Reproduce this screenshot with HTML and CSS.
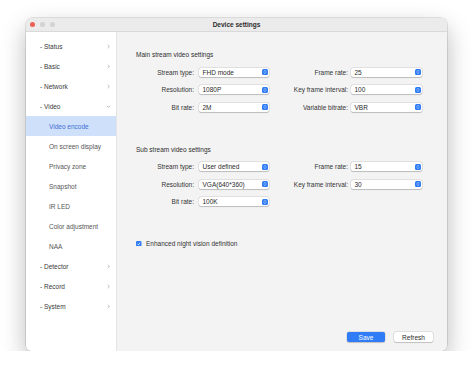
FILE: index.html
```html
<!DOCTYPE html>
<html lang="en">

<head>
    <meta charset="UTF-8">
    <meta name="viewport" content="width=device-width, initial-scale=1.0">
    <title>Device settings</title>

    <link rel="stylesheet" href="styles.css">

</head>

<body>

    <div class="window">

        <div class="titlebar">
            <div class="lights">
                <span class="light red"></span>
                <span class="light"></span>
                <span class="light"></span>
            </div>
            <div class="title">Device settings</div>
        </div>

        <div class="body">

            <!-- menu lateral -->
            <div class="sidebar">
                <div class="item"><span>- Status</span><svg class="chev" viewBox="0 0 6 6"><polyline points="2,1 4,3 2,5"/></svg></div>
                <div class="item"><span>- Basic</span><svg class="chev" viewBox="0 0 6 6"><polyline points="2,1 4,3 2,5"/></svg></div>
                <div class="item"><span>- Network</span><svg class="chev" viewBox="0 0 6 6"><polyline points="2,1 4,3 2,5"/></svg></div>
                <div class="item"><span>- Video</span><svg class="chev" viewBox="0 0 6 6"><polyline points="1,2 3,4 5,2"/></svg></div>
                <div class="sub active">Video encode</div>
                <div class="sub">On screen display</div>
                <div class="sub">Privacy zone</div>
                <div class="sub">Snapshot</div>
                <div class="sub">IR LED</div>
                <div class="sub">Color adjustment</div>
                <div class="sub">NAA</div>
                <div class="item"><span>- Detector</span><svg class="chev" viewBox="0 0 6 6"><polyline points="2,1 4,3 2,5"/></svg></div>
                <div class="item"><span>- Record</span><svg class="chev" viewBox="0 0 6 6"><polyline points="2,1 4,3 2,5"/></svg></div>
                <div class="item"><span>- System</span><svg class="chev" viewBox="0 0 6 6"><polyline points="2,1 4,3 2,5"/></svg></div>
            </div>

            <div class="main">

                <div class="heading">Main stream video settings</div>
                <div class="form form-main">
                    <div class="lbl">Stream type:</div>
                    <div class="select"><span>FHD mode</span><svg class="step" viewBox="0 0 12 12"><rect width="12" height="12" rx="3"/><polyline points="4,5 6,3 8,5"/><polyline points="4,7 6,9 8,7"/></svg></div>
                    <div class="lbl r">Frame rate:</div>
                    <div class="select"><span>25</span><svg class="step" viewBox="0 0 12 12"><rect width="12" height="12" rx="3"/><polyline points="4,5 6,3 8,5"/><polyline points="4,7 6,9 8,7"/></svg></div>

                    <div class="lbl">Resolution:</div>
                    <div class="select"><span>1080P</span><svg class="step" viewBox="0 0 12 12"><rect width="12" height="12" rx="3"/><polyline points="4,5 6,3 8,5"/><polyline points="4,7 6,9 8,7"/></svg></div>
                    <div class="lbl r">Key frame interval:</div>
                    <div class="select"><span>100</span><svg class="step" viewBox="0 0 12 12"><rect width="12" height="12" rx="3"/><polyline points="4,5 6,3 8,5"/><polyline points="4,7 6,9 8,7"/></svg></div>

                    <div class="lbl">Bit rate:</div>
                    <div class="select"><span>2M</span><svg class="step" viewBox="0 0 12 12"><rect width="12" height="12" rx="3"/><polyline points="4,5 6,3 8,5"/><polyline points="4,7 6,9 8,7"/></svg></div>
                    <div class="lbl r">Variable bitrate:</div>
                    <div class="select"><span>VBR</span><svg class="step" viewBox="0 0 12 12"><rect width="12" height="12" rx="3"/><polyline points="4,5 6,3 8,5"/><polyline points="4,7 6,9 8,7"/></svg></div>
                </div>

                <div class="heading heading-sub">Sub stream video settings</div>
                <div class="form form-sub">
                    <div class="lbl">Stream type:</div>
                    <div class="select"><span>User defined</span><svg class="step" viewBox="0 0 12 12"><rect width="12" height="12" rx="3"/><polyline points="4,5 6,3 8,5"/><polyline points="4,7 6,9 8,7"/></svg></div>
                    <div class="lbl r">Frame rate:</div>
                    <div class="select"><span>15</span><svg class="step" viewBox="0 0 12 12"><rect width="12" height="12" rx="3"/><polyline points="4,5 6,3 8,5"/><polyline points="4,7 6,9 8,7"/></svg></div>

                    <div class="lbl">Resolution:</div>
                    <div class="select"><span>VGA(640*360)</span><svg class="step" viewBox="0 0 12 12"><rect width="12" height="12" rx="3"/><polyline points="4,5 6,3 8,5"/><polyline points="4,7 6,9 8,7"/></svg></div>
                    <div class="lbl r">Key frame interval:</div>
                    <div class="select"><span>30</span><svg class="step" viewBox="0 0 12 12"><rect width="12" height="12" rx="3"/><polyline points="4,5 6,3 8,5"/><polyline points="4,7 6,9 8,7"/></svg></div>

                    <div class="lbl">Bit rate:</div>
                    <div class="select"><span>100K</span><svg class="step" viewBox="0 0 12 12"><rect width="12" height="12" rx="3"/><polyline points="4,5 6,3 8,5"/><polyline points="4,7 6,9 8,7"/></svg></div>
                </div>

                <div class="check">
                    <svg class="box" viewBox="0 0 12 12"><rect width="12" height="12" rx="2.5"/><polyline points="3,6.3 5.2,8.5 9,3.6"/></svg>
                    <span>Enhanced night vision definition</span>
                </div>

                <div class="actions">
                    <div class="btn save">Save</div>
                    <div class="btn">Refresh</div>
                </div>

            </div>

        </div>

    </div>

</body>

</html>
```

FILE: styles.css
```css
body {
    margin: 0;
    background-color: #ffffff;
    font-family: 'Liberation Sans', Arial, sans-serif;
    font-size: 6.5px;
    color: #333333;
}

.window {
    width: 421px;
    height: 333px;
    margin: 18px 0 0 26px;
    border-radius: 6px;
    overflow: hidden;
    display: flex;
    flex-direction: column;
    box-shadow: 0 0 0 0.5px rgba(0, 0, 0, 0.2), 0 10px 24px rgba(0, 0, 0, 0.28);
}

.titlebar {
    height: 14px;
    flex: none;
    display: flex;
    align-items: center;
    position: relative;
    background-color: #ebebeb;
    border-bottom: 1px solid #d9d9d9;
    box-sizing: border-box;
}

.lights {
    display: flex;
    gap: 4.5px;
    padding-left: 3.5px;
}

.light {
    width: 5.5px;
    height: 5.5px;
    border-radius: 50%;
    background-color: #d3d3d3;
}

.light.red {
    background-color: #ec5f56;
}

.title {
    position: absolute;
    left: 0;
    right: 0;
    text-align: center;
    font-weight: bold;
    color: #2b2b2b;
}

.body {
    flex: 1;
    display: flex;
}

.sidebar {
    width: 91px;
    flex: none;
    background-color: #ffffff;
    border-right: 1px solid #e4e4e4;
    box-sizing: border-box;
    padding-top: 4px;
}

.item,
.sub {
    height: 20px;
    display: flex;
    align-items: center;
}

.item {
    justify-content: space-between;
    padding: 0 5px 0 14px;
    color: #3a3a3a;
}

.sub {
    padding-left: 23px;
    color: #555555;
}

.sub.active {
    background-color: #cfe0fa;
    color: #3d6fd6;
}

.chev {
    width: 5px;
    height: 5px;
    fill: none;
    stroke: #9a9a9a;
    stroke-width: 0.8;
}

.main {
    flex: 1;
    background-color: #f3f3f3;
    padding: 19px 14px 9px 19px;
    display: flex;
    flex-direction: column;
}

.heading {
    line-height: 8px;
    color: #2e2e2e;
}

.heading-sub {
    margin-top: 30px;
}

.form {
    display: grid;
    grid-template-columns: 63px 70px 82px 71px;
    grid-auto-rows: 17.6px;
    align-items: center;
}

.form-main {
    margin-top: 4.5px;
}

.form-sub {
    margin-top: 3.5px;
}

.lbl {
    text-align: right;
    padding-right: 5px;
    color: #333333;
    white-space: nowrap;
}

.lbl.r {
    padding-right: 3px;
}

.select {
    height: 9px;
    background-color: #ffffff;
    border-radius: 2px;
    box-shadow: 0 0 0 0.5px rgba(0, 0, 0, 0.12), 0 0.5px 1px rgba(0, 0, 0, 0.18);
    display: flex;
    align-items: center;
    justify-content: space-between;
    padding: 0 1.5px 0 3.5px;
    color: #2b2b2b;
}

.step {
    width: 6px;
    height: 6px;
}

.step rect {
    fill: #2f7cf6;
}

.step polyline {
    fill: none;
    stroke: #ffffff;
    stroke-width: 1.3;
}

.check {
    margin-top: 29px;
    display: flex;
    align-items: center;
    gap: 4.5px;
    line-height: 8px;
}

.box {
    width: 5.5px;
    height: 5.5px;
}

.box rect {
    fill: #2f7cf6;
}

.box polyline {
    fill: none;
    stroke: #ffffff;
    stroke-width: 1.6;
}

.actions {
    margin-top: auto;
    display: flex;
    justify-content: flex-end;
    gap: 9px;
}

.btn {
    width: 39px;
    height: 10px;
    border-radius: 2px;
    display: flex;
    align-items: center;
    justify-content: center;
    background-color: #ffffff;
    color: #2b2b2b;
    box-shadow: 0 0 0 0.5px rgba(0, 0, 0, 0.14), 0 0.5px 1px rgba(0, 0, 0, 0.15);
}

.btn.save {
    width: 38px;
    background-color: #2f7cf6;
    color: #ffffff;
}
```
